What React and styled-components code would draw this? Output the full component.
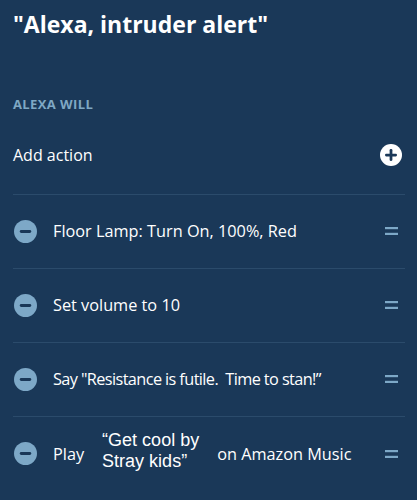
import React from 'react'
import styled, { createGlobalStyle } from 'styled-components'

const GlobalStyle = createGlobalStyle`
  html, body {
    margin: 0;
    padding: 0;
    background: #1a3858;
  }
`

const actions = [
  { id: 1, text: 'Floor Lamp: Turn On, 100%, Red' },
  { id: 2, text: 'Set volume to 10' },
  { id: 3, text: 'Say "Resistance is futile.  Time to stan!”', tight: true },
  { id: 4, play: true }
]

const MinusIcon = () => (
  <svg width='23' height='23' viewBox='0 0 24 24'>
    <circle cx='12' cy='12' r='12' fill='#7da8c7' />
    <rect x='6' y='10.5' width='12' height='3' rx='1.5' fill='#1a3858' />
  </svg>
)

const PlusIcon = () => (
  <svg width='22' height='22' viewBox='0 0 24 24'>
    <circle cx='12' cy='12' r='12' fill='#ffffff' />
    <rect x='5.5' y='10.5' width='13' height='3' rx='1.2' fill='#1a3858' />
    <rect x='10.5' y='5.5' width='3' height='13' rx='1.2' fill='#1a3858' />
  </svg>
)

const HandleIcon = () => (
  <svg width='13' height='10' viewBox='0 0 13 10'>
    <rect x='0' y='1' width='13' height='2.2' fill='#7da8c7' />
    <rect x='0' y='6.8' width='13' height='2.2' fill='#7da8c7' />
  </svg>
)

const App = () => {
  return (
    <Page>
      <GlobalStyle />
      <Title>"Alexa, intruder alert"</Title>
      <SectionLabel>ALEXA WILL</SectionLabel>
      <AddRow>
        <AddText>Add action</AddText>
        <PlusIcon />
      </AddRow>
      {actions.map(action => (
        <ActionRow key={action.id}>
          <MinusIcon />
          {action.play ? (
            <PlayText>
              <span>Play</span>
              <SongQuote>
                “Get cool by
                <br />
                Stray kids”
              </SongQuote>
              <span>on Amazon Music</span>
            </PlayText>
          ) : (
            <ActionText $tight={action.tight}>{action.text}</ActionText>
          )}
          <Handle>
            <HandleIcon />
          </Handle>
        </ActionRow>
      ))}
    </Page>
  )
}

const Page = styled.div`
  width: 417px;
  height: 500px;
  overflow: hidden;
  box-sizing: border-box;
  padding: 0 12px 0 13px;
  background: #1a3858;
  color: #ffffff;
  font-family: 'Open Sans', 'Noto Sans', sans-serif;
`

const Title = styled.h1`
  margin: 0;
  padding-top: 9px;
  font-size: 23px;
  line-height: 30px;
  font-weight: 700;
`

const SectionLabel = styled.div`
  margin-top: 57px;
  font-size: 13px;
  line-height: 16px;
  font-weight: 700;
  letter-spacing: 0.4px;
  color: #7fa8c4;
`

const AddRow = styled.div`
  display: flex;
  align-items: center;
  justify-content: space-between;
  height: 83px;
  box-sizing: border-box;
  padding: 4px 3px 0 0;
  border-bottom: 1px solid #2b4b6b;
`

const AddText = styled.div`
  font-size: 16px;
`

const ActionRow = styled.div`
  display: flex;
  align-items: center;
  height: 74px;
  border-bottom: 1px solid #2b4b6b;
  box-sizing: border-box;
  padding: 0 0 1px 1px;

  &:last-child {
    border-bottom: none;
  }
`

const ActionText = styled.div`
  flex: 1;
  margin-left: 16px;
  font-size: 16.3px;
  white-space: pre;
  letter-spacing: ${props => (props.$tight ? '-0.6px' : '0')};
`

const PlayText = styled.div`
  flex: 1;
  display: flex;
  align-items: center;
  margin-left: 16px;
  font-size: 16.3px;
  white-space: nowrap;
`

const SongQuote = styled.span`
  margin: -6px 18px 0 18px;
  font-family: 'Liberation Sans', Arial, sans-serif;
  font-size: 18px;
  line-height: 21px;
`

const Handle = styled.div`
  display: flex;
  margin-right: 7px;
`

export default App
